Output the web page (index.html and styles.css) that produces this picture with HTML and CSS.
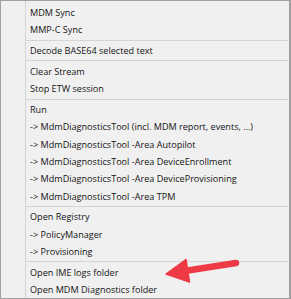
FILE: index.html
```html
<!DOCTYPE html>
<html>
<head>
<meta charset="utf-8">
<link rel="stylesheet" href="styles.css">
</head>
<body>
<div class="menu">
  <div class="gutter"></div>
  <ul class="items">
    <li class="item">MDM Sync</li>
    <li class="item">MMP-C Sync</li>
    <li class="sep"></li>
    <li class="item">Decode BASE64 selected text</li>
    <li class="sep"></li>
    <li class="item">Clear Stream</li>
    <li class="item">Stop ETW session</li>
    <li class="sep"></li>
    <li class="item">Run</li>
    <li class="item">-&gt; MdmDiagnosticsTool (incl. MDM report, events, ...)</li>
    <li class="item">-&gt; MdmDiagnosticsTool -Area Autopilot</li>
    <li class="item">-&gt; MdmDiagnosticsTool -Area DeviceEnrollment</li>
    <li class="item">-&gt; MdmDiagnosticsTool -Area DeviceProvisioning</li>
    <li class="item">-&gt; MdmDiagnosticsTool -Area TPM</li>
    <li class="sep"></li>
    <li class="item">Open Registry</li>
    <li class="item">-&gt; PolicyManager</li>
    <li class="item">-&gt; Provisioning</li>
    <li class="sep"></li>
    <li class="item">Open IME logs folder</li>
    <li class="item">Open MDM Diagnostics folder</li>
  </ul>
  <svg class="arrow" width="291" height="299" viewBox="0 0 291 299">
    <line x1="236" y1="263" x2="186" y2="270.8" stroke="#ee3a44" stroke-width="6.5" stroke-linecap="round"/>
    <polygon points="166,274 186,259.5 189.5,282" fill="#ee3a44" stroke="#ee3a44" stroke-width="1.5" stroke-linejoin="round"/>
  </svg>
</div>
</body>
</html>
```

FILE: styles.css
```css
html, body {
  margin: 0;
  padding: 0;
  background: #f0f0f0;
}
.menu {
  position: relative;
  box-sizing: border-box;
  width: 291px;
  height: 299px;
  background: #f0f0f0;
  border: 1px solid #a0a0a0;
  border-right-width: 2px;
  display: flex;
  font-family: "Open Sans", "Noto Sans", sans-serif;
  font-size: 9.1px;
  color: #141414;
  overflow: hidden;
}
.gutter {
  width: 24px;
  flex: none;
  border-right: 1px solid #d4d4d4;
}
.items {
  list-style: none;
  margin: 0;
  padding: 3px 0 0 0;
  flex: 1;
}
.item {
  height: 17.35px;
  line-height: 17.35px;
  padding-left: 4px;
  white-space: nowrap;
}
.sep {
  height: 3.4px;
  box-sizing: border-box;
  padding-top: 1px;
  margin-right: 1px;
}
.sep::before {
  content: "";
  display: block;
  height: 1px;
  background: #d5d5d5;
}
.arrow {
  position: absolute;
  left: -1px;
  top: -1px;
  pointer-events: none;
}
```
